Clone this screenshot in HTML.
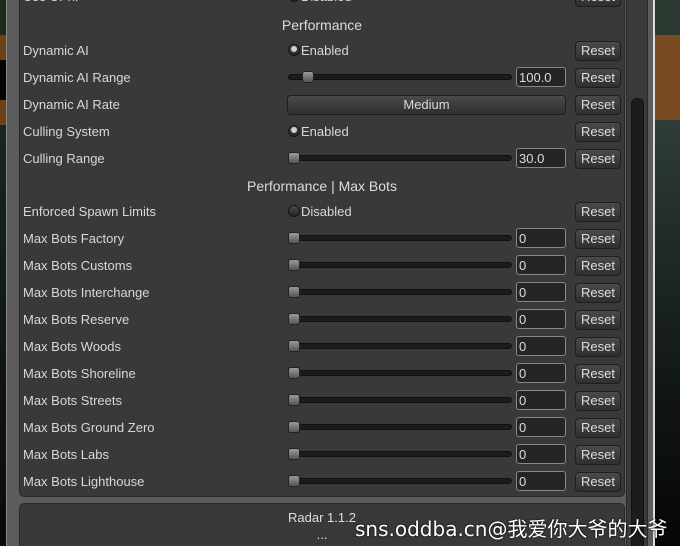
<!DOCTYPE html><html><head><meta charset="utf-8"><style>
*{margin:0;padding:0;box-sizing:border-box}
html{width:680px;height:546px;overflow:hidden}
body{width:680px;height:546px;overflow:hidden;position:relative;background:#0a0d0c;font-family:"Liberation Sans","DejaVu Sans",sans-serif;font-size:13px;color:#d8d8d8}
.a{position:absolute}
.row{position:absolute;left:0;width:680px;height:20px}
.lbl{position:absolute;left:23px;top:3px}
.rad{position:absolute;left:288px;top:4px;width:12px;height:12px;border-radius:50%;background:linear-gradient(#4a4a4a,#262626);border:1px solid #151515}
.rad.on::after{content:"";position:absolute;left:2px;top:1px;width:6px;height:6px;border-radius:50%;background:#cfcfcf}
.rt{position:absolute;left:301px;top:3px}
.trk{position:absolute;left:288px;top:7px;width:224px;height:6px;border-radius:3px;background:#1c1c1c;border:1px solid #111}
.th{position:absolute;top:4px;width:12px;height:12px;border-radius:3px;background:linear-gradient(#9a9a9a,#555);border:1px solid #222}
.inp{position:absolute;left:516px;top:0;width:50px;height:20px;border:1px solid #888;border-radius:3px;background:#252525;padding:2px 2px;color:#ddd}
.rst{position:absolute;left:575px;top:1px;width:46px;height:20px;border:1px solid #1e1e1e;border-radius:4px;background:linear-gradient(#4a4a4a,#2f2f2f);text-align:center;line-height:18px;color:#ddd}
.hdr{position:absolute;left:19px;width:606px;text-align:center;font-size:14px;color:#ddd}
</style></head><body>
<div class="a" style="left:0;top:0;width:7px;height:35px;background:#1c2a1a"></div>
<div class="a" style="left:0;top:35px;width:7px;height:25px;background:#6e4218"></div>
<div class="a" style="left:0;top:60px;width:7px;height:40px;background:#050505"></div>
<div class="a" style="left:0;top:100px;width:7px;height:25px;background:#6e4218"></div>
<div class="a" style="left:0;top:125px;width:7px;height:421px;background:linear-gradient(#1a2522,#080a09)"></div>
<div class="a" style="left:655px;top:0;width:25px;height:35px;background:#2b3a30"></div>
<div class="a" style="left:655px;top:35px;width:25px;height:85px;background:#7a4a22"></div>
<div class="a" style="left:655px;top:120px;width:25px;height:426px;background:linear-gradient(#2e3c3a,#121816 60%,#050606)"></div>
<div class="a" style="left:6px;top:0;width:1px;height:546px;background:#888"></div>
<div class="a" style="left:7px;top:0;width:647px;height:546px;background:#5c5c5c"></div>
<div class="a" style="left:653px;top:0;width:2px;height:546px;background:#ddd"></div>
<div class="a" style="left:19px;top:-10px;width:606px;height:507px;background:#393939;border:1px solid #2a2a2a;border-radius:5px"></div>
<div class="a" style="left:19px;top:503px;width:606px;height:43px;background:#393939;border:1px solid #2a2a2a;border-bottom:none;border-radius:5px 5px 0 0"></div>
<div class="a" style="left:626px;top:0;width:22px;height:546px;background:#3a3a3a;border-left:1px solid #2a2a2a;border-right:1px solid #2a2a2a"></div>
<div class="a" style="left:631px;top:98px;width:13px;height:448px;background:#1c1c1c;border:1px solid #111;border-bottom:none;border-radius:6px 6px 0 0"></div>

<div class="row" style="top:-14px"><span class="lbl">Use UPnP</span><div class="rad"></div><span class="rt">Disabled</span><div class="rst">Reset</div></div>
<div class="hdr" style="top:17px">Performance</div>
<div class="row" style="top:40px"><span class="lbl">Dynamic AI</span><div class="rad on"></div><span class="rt">Enabled</span><div class="rst">Reset</div></div>
<div class="row" style="top:67px"><span class="lbl">Dynamic AI Range</span><div class="trk"></div><div class="th" style="left:302px"></div><div class="inp">100.0</div><div class="rst">Reset</div></div>
<div class="row" style="top:94px"><span class="lbl">Dynamic AI Rate</span><div class="a" style="left:287px;top:1px;width:279px;height:20px;border:1px solid #1e1e1e;border-radius:4px;background:linear-gradient(#4a4a4a,#2f2f2f);text-align:center;line-height:18px">Medium</div><div class="rst">Reset</div></div>
<div class="row" style="top:121px"><span class="lbl">Culling System</span><div class="rad on"></div><span class="rt">Enabled</span><div class="rst">Reset</div></div>
<div class="row" style="top:148px"><span class="lbl">Culling Range</span><div class="trk"></div><div class="th" style="left:288px"></div><div class="inp">30.0</div><div class="rst">Reset</div></div>
<div class="hdr" style="top:178px">Performance | Max Bots</div>
<div class="row" style="top:201px"><span class="lbl">Enforced Spawn Limits</span><div class="rad"></div><span class="rt">Disabled</span><div class="rst">Reset</div></div>
<div class="row" style="top:228px"><span class="lbl">Max Bots Factory</span><div class="trk"></div><div class="th" style="left:288px"></div><div class="inp">0</div><div class="rst">Reset</div></div>
<div class="row" style="top:255px"><span class="lbl">Max Bots Customs</span><div class="trk"></div><div class="th" style="left:288px"></div><div class="inp">0</div><div class="rst">Reset</div></div>
<div class="row" style="top:282px"><span class="lbl">Max Bots Interchange</span><div class="trk"></div><div class="th" style="left:288px"></div><div class="inp">0</div><div class="rst">Reset</div></div>
<div class="row" style="top:309px"><span class="lbl">Max Bots Reserve</span><div class="trk"></div><div class="th" style="left:288px"></div><div class="inp">0</div><div class="rst">Reset</div></div>
<div class="row" style="top:336px"><span class="lbl">Max Bots Woods</span><div class="trk"></div><div class="th" style="left:288px"></div><div class="inp">0</div><div class="rst">Reset</div></div>
<div class="row" style="top:363px"><span class="lbl">Max Bots Shoreline</span><div class="trk"></div><div class="th" style="left:288px"></div><div class="inp">0</div><div class="rst">Reset</div></div>
<div class="row" style="top:390px"><span class="lbl">Max Bots Streets</span><div class="trk"></div><div class="th" style="left:288px"></div><div class="inp">0</div><div class="rst">Reset</div></div>
<div class="row" style="top:417px"><span class="lbl">Max Bots Ground Zero</span><div class="trk"></div><div class="th" style="left:288px"></div><div class="inp">0</div><div class="rst">Reset</div></div>
<div class="row" style="top:444px"><span class="lbl">Max Bots Labs</span><div class="trk"></div><div class="th" style="left:288px"></div><div class="inp">0</div><div class="rst">Reset</div></div>
<div class="row" style="top:471px"><span class="lbl">Max Bots Lighthouse</span><div class="trk"></div><div class="th" style="left:288px"></div><div class="inp">0</div><div class="rst">Reset</div></div>
<div class="hdr" style="top:510px;font-size:13px">Radar 1.1.2</div>
<div class="hdr" style="top:527px;font-size:13px">...</div>
<div class="a" style="left:355px;top:513px;font-size:20px;color:#fff;white-space:nowrap;font-family:'DejaVu Sans','Noto Sans CJK SC',sans-serif;text-shadow:0 0 2px #000">sns.oddba.cn@我爱你大爷的大爷</div>
</body></html>
